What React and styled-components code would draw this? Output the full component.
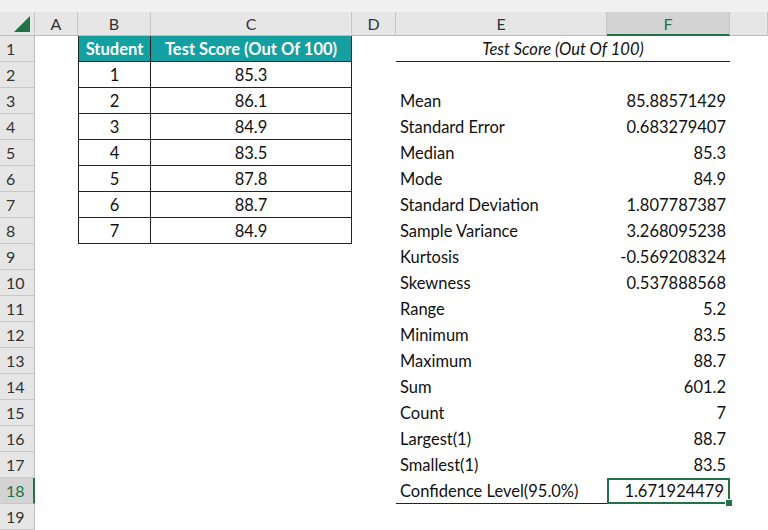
import styled, { createGlobalStyle, css } from "styled-components";

const Global = createGlobalStyle`
  body { margin: 0; background: #fff; font-family: Lato, "Open Sans", sans-serif; }
`;

const cols = ["A", "B", "C", "D", "E", "F", ""];
const widths = "35px 43px 73px 201px 44px 211px 123px 38px";

const scores = ["85.3", "86.1", "84.9", "83.5", "87.8", "88.7", "84.9"];
const stats = [
  ["Mean", "85.88571429"],
  ["Standard Error", "0.683279407"],
  ["Median", "85.3"],
  ["Mode", "84.9"],
  ["Standard Deviation", "1.807787387"],
  ["Sample Variance", "3.268095238"],
  ["Kurtosis", "-0.569208324"],
  ["Skewness", "0.537888568"],
  ["Range", "5.2"],
  ["Minimum", "83.5"],
  ["Maximum", "88.7"],
  ["Sum", "601.2"],
  ["Count", "7"],
  ["Largest(1)", "88.7"],
  ["Smallest(1)", "83.5"],
  ["Confidence Level(95.0%)", "1.671924479"],
];

const Sheet = styled.div`
  width: 768px;
  height: 530px;
  overflow: hidden;
  background: #fff;
`;

const TopBand = styled.div`
  height: 12px;
  background: #f0f0f0;
`;

const Grid = styled.div`
  display: grid;
  grid-template-columns: ${widths};
  grid-template-rows: 24px repeat(19, 26px);
  font-size: 16.5px;
  color: #111;
`;

const ColHead = styled.div`
  background: ${(p) => (p.$sel ? "#d3d3d3" : "#e6e6e6")};
  color: ${(p) => (p.$sel ? "#217346" : "#333")};
  border-right: 1px solid #c8c8c8;
  border-bottom: ${(p) => (p.$sel ? "2px solid #217346" : "1px solid #bcbcbc")};
  display: flex;
  align-items: center;
  justify-content: center;
  font-size: 16px;
`;

const Corner = styled(ColHead)`
  position: relative;
  &::after {
    content: "";
    position: absolute;
    right: 4px;
    bottom: 3px;
    border-left: 16px solid transparent;
    border-bottom: 16px solid #217346;
  }
`;

const RowHead = styled.div`
  background: ${(p) => (p.$sel ? "#d3d3d3" : "#e6e6e6")};
  color: ${(p) => (p.$sel ? "#217346" : "#333")};
  border-bottom: 1px solid #c8c8c8;
  border-right: ${(p) => (p.$sel ? "2px solid #217346" : "1px solid #bcbcbc")};
  display: flex;
  align-items: center;
  padding-left: 6px;
  font-size: 16px;
`;

const Cell = styled.div`
  display: flex;
  align-items: center;
  white-space: nowrap;
  padding: 0 4px;
  justify-content: ${(p) => p.$align || "flex-start"};
  ${(p) =>
    p.$boxed &&
    css`
      border-right: 1px solid #222;
      border-bottom: 1px solid #222;
    `}
  ${(p) => p.$boxedLeft && css`border-left: 1px solid #222;`}
  ${(p) =>
    p.$head &&
    css`
      background: #14a0a0;
      color: #fff;
      font-weight: bold;
      border-right: 1px solid #222;
      border-bottom: 1px solid #222;
    `}
  ${(p) => p.$under && css`border-bottom: 1.5px solid #222;`}
  ${(p) => p.$italic && css`font-style: italic;`}
  ${(p) =>
    p.$active &&
    css`
      border: 2px solid #217346;
      position: relative;
      &::after {
        content: "";
        position: absolute;
        right: -5px;
        bottom: -5px;
        width: 6px;
        height: 6px;
        background: #217346;
        border: 1px solid #fff;
      }
    `}
`;

export default function App() {
  const rows = [];
  for (let r = 1; r <= 19; r++) {
    const sel = r === 18;
    const cells = [<RowHead key="h" $sel={sel}>{r}</RowHead>, <Cell key="a" />];
    if (r === 1) {
      cells.push(
        <Cell key="b" $head $boxedLeft $align="center">Student</Cell>,
        <Cell key="c" $head $align="center">Test Score (Out Of 100)</Cell>
      );
    } else if (r <= 8) {
      cells.push(
        <Cell key="b" $boxed $boxedLeft $align="center">{r - 1}</Cell>,
        <Cell key="c" $boxed $align="center">{scores[r - 2]}</Cell>
      );
    } else {
      cells.push(<Cell key="b" />, <Cell key="c" />);
    }
    cells.push(<Cell key="d" />);
    if (r === 1) {
      cells.push(
        <Cell key="ef" $under $italic $align="center" style={{ gridColumn: "span 2" }}>
          Test Score (Out Of 100)
        </Cell>
      );
    } else if (r === 2 || r === 19) {
      cells.push(<Cell key="e" />, <Cell key="f" />);
    } else {
      const [label, val] = stats[r - 3];
      cells.push(
        <Cell key="e" $under={r === 18}>{label}</Cell>,
        <Cell key="f" $align="flex-end" $under={r === 18 && false} $active={r === 18}>{val}</Cell>
      );
    }
    cells.push(<Cell key="g" />);
    rows.push(...cells);
  }

  return (
    <Sheet>
      <Global />
      <TopBand />
      <Grid>
        <Corner />
        {cols.map((c, i) => (
          <ColHead key={i} $sel={c === "F"}>{c}</ColHead>
        ))}
        {rows}
      </Grid>
    </Sheet>
  );
}
